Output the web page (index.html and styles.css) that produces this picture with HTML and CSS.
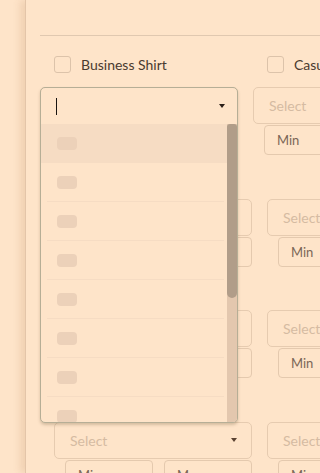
FILE: index.html
```html
<!DOCTYPE html>
<html>
<head>
<meta charset="utf-8">
<link rel="stylesheet" href="styles.css">
</head>
<body>
<div class="shell">
  <div class="rail"></div>
  <main class="panel">
    <div class="rule"></div>

    <div class="cols checks">
      <label class="check"><span class="box"></span><span class="check-label">Business Shirt</span></label>
      <label class="check"><span class="box"></span><span class="check-label">Casual Shirt</span></label>
    </div>

    <div class="cols group first">
      <div class="field">
        <div class="select"><span class="ph">Select</span><span class="caret"></span></div>
        <div class="range"><div class="num">Min</div><div class="num">Max</div></div>
        <div class="dropdown">
          <div class="dd-head"><span class="cursor"></span><span class="caret dark"></span></div>
          <div class="dd-body">
            <div class="dd-list">
              <div class="opt active"><span class="skel"></span></div>
              <div class="opt"><span class="skel"></span></div>
              <div class="opt"><span class="skel"></span></div>
              <div class="opt"><span class="skel"></span></div>
              <div class="opt"><span class="skel"></span></div>
              <div class="opt"><span class="skel"></span></div>
              <div class="opt"><span class="skel"></span></div>
              <div class="opt"><span class="skel"></span></div>
            </div>
            <div class="track"><div class="thumb"></div></div>
          </div>
        </div>
      </div>
      <div class="field">
        <div class="select"><span class="ph">Select</span><span class="caret"></span></div>
        <div class="range"><div class="num">Min</div><div class="num">Max</div></div>
      </div>
    </div>

    <div class="cols group">
      <div class="field">
        <div class="select"><span class="ph">Select</span><span class="caret"></span></div>
        <div class="range"><div class="num">Min</div><div class="num">Max</div></div>
      </div>
      <div class="field">
        <div class="select"><span class="ph">Select</span><span class="caret"></span></div>
        <div class="range"><div class="num">Min</div><div class="num">Max</div></div>
      </div>
    </div>

    <div class="cols group">
      <div class="field">
        <div class="select"><span class="ph">Select</span><span class="caret"></span></div>
        <div class="range"><div class="num">Min</div><div class="num">Max</div></div>
      </div>
      <div class="field">
        <div class="select"><span class="ph">Select</span><span class="caret"></span></div>
        <div class="range"><div class="num">Min</div><div class="num">Max</div></div>
      </div>
    </div>

    <div class="cols group">
      <div class="field">
        <div class="select"><span class="ph">Select</span><span class="caret"></span></div>
        <div class="range"><div class="num">Min</div><div class="num">Max</div></div>
      </div>
      <div class="field">
        <div class="select"><span class="ph">Select</span><span class="caret"></span></div>
        <div class="range"><div class="num">Min</div><div class="num">Max</div></div>
      </div>
    </div>
  </main>
</div>
</body>
</html>
```

FILE: styles.css
```css
* { box-sizing: border-box; }

html, body {
  margin: 0;
  padding: 0;
  height: 473px;
  overflow: hidden;
  background: #fee4c9;
  font-family: Lato, "Noto Sans", sans-serif;
}

.shell {
  display: flex;
  width: 100%;
  height: 473px;
  overflow: hidden;
}

.rail {
  width: 25px;
  flex: none;
  background: #fee4c9;
}

.panel {
  flex: 1;
  min-width: 0;
  height: 473px;
  overflow: hidden;
  background: #fee4c9;
  border-left: 1px solid #e3c5a9;
  box-shadow: -5px 0 7px rgba(170, 110, 60, 0.16);
  padding-top: 35px;
}

.rule {
  height: 1px;
  margin-left: 14px;
  background: #e0c8b0;
}

.cols {
  display: grid;
  grid-template-columns: 198px 198px;
  column-gap: 15px;
  margin-left: 28px;
}

.checks {
  margin-top: 20px;
  height: 16px;
}

.check {
  display: flex;
  align-items: center;
  gap: 10px;
  height: 16px;
}

.box {
  width: 17px;
  height: 17px;
  border: 1px solid #dcc3aa;
  border-radius: 3px;
  flex: none;
}

.check-label {
  font-size: 14px;
  color: #4a3a2f;
  white-space: nowrap;
}

.group {
  margin-top: 43.5px;
}

.group.first {
  margin-top: 15px;
  margin-left: 14px;
  position: relative;
  z-index: 5;
}

.field {
  position: relative;
}

.select {
  height: 37px;
  border: 1px solid #e6cbb0;
  border-radius: 5px;
  display: flex;
  align-items: center;
  justify-content: space-between;
  padding: 0 14px 0 15px;
}

.ph {
  font-size: 14px;
  color: #d5bba2;
}

.caret {
  width: 0;
  height: 0;
  border-left: 3.5px solid transparent;
  border-right: 3.5px solid transparent;
  border-top: 4px solid #5a4232;
}

.caret.dark {
  border-top-color: #2a1f18;
}

.range {
  display: flex;
  gap: 11px;
  padding-left: 11px;
  height: 30px;
  margin-top: 1px;
}

.num {
  width: 88px;
  height: 30px;
  border: 1px solid #e4c9ae;
  border-radius: 4px;
  font-size: 13px;
  color: #7a6656;
  padding-left: 12px;
  display: flex;
  align-items: center;
}

/* open dropdown overlay */
.dropdown {
  position: absolute;
  top: 0;
  left: 0;
  z-index: 10;
  width: 198px;
  height: 336px;
  background: #fee4c9;
  border: 1px solid #b6ae96;
  border-radius: 5px;
  box-shadow: 0 2px 3px rgba(90, 70, 40, 0.25);
  overflow: hidden;
  display: flex;
  flex-direction: column;
}

.dd-head {
  height: 36px;
  flex: none;
  display: flex;
  align-items: center;
  justify-content: space-between;
  padding: 0 12px 0 15px;
}

.cursor {
  width: 1px;
  height: 17px;
  background: #1a1410;
}

.dd-body {
  flex: 1;
  display: flex;
  min-height: 0;
}

.dd-list {
  flex: 1;
  overflow: hidden;
}

.opt {
  height: 39px;
  display: flex;
  align-items: center;
  padding-left: 16px;
  background: linear-gradient(#f6dcc3, #f6dcc3) no-repeat 6px 100% / calc(100% - 9px) 1px;
}

.opt.active {
  background-color: #f6dcc3;
}

.skel {
  width: 20px;
  height: 13px;
  border-radius: 4px;
  background: #ecd1b9;
}

.track {
  width: 10px;
  flex: none;
  background: #e3c7ae;
}

.thumb {
  height: 174px;
  background: #b19d89;
  border-radius: 3px 3px 5px 5px;
}
```
